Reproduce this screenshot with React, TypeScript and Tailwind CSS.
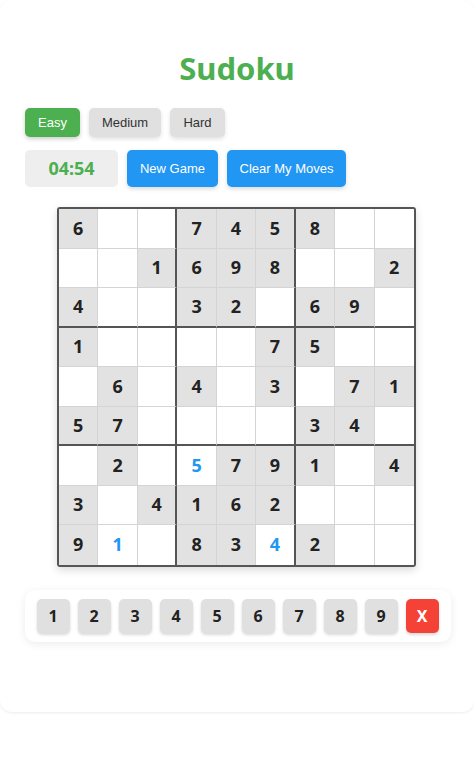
import React from "react";

type Cell = { v: number; given: boolean };

// 0 = empty, negative = player's own entry
const board: number[][] = [
  [6, 0, 0, 7, 4, 5, 8, 0, 0],
  [0, 0, 1, 6, 9, 8, 0, 0, 2],
  [4, 0, 0, 3, 2, 0, 6, 9, 0],
  [1, 0, 0, 0, 0, 7, 5, 0, 0],
  [0, 6, 0, 4, 0, 3, 0, 7, 1],
  [5, 7, 0, 0, 0, 0, 3, 4, 0],
  [0, 2, 0, -5, 7, 9, 1, 0, 4],
  [3, 0, 4, 1, 6, 2, 0, 0, 0],
  [9, -1, 0, 8, 3, -4, 2, 0, 0],
];

const cells: Cell[][] = board.map((row) =>
  row.map((n) => ({ v: Math.abs(n), given: n > 0 }))
);

function SudokuCell({ cell, r, c }: { cell: Cell; r: number; c: number }) {
  const right =
    c === 8 ? "" : c === 2 || c === 5 ? "border-r-2 border-r-[#555]" : "border-r border-r-[#d4d4d4]";
  const bottom =
    r === 8 ? "" : r === 2 || r === 5 ? "border-b-2 border-b-[#555]" : "border-b border-b-[#d4d4d4]";
  const bg = cell.given ? "bg-[#e2e2e2]" : "bg-white";
  const color = cell.given ? "text-[#222]" : "text-[#2196f3]";
  return (
    <div
      className={`flex h-[39.5px] items-center justify-center text-[18px] font-bold ${right} ${bottom} ${bg} ${color}`}
    >
      {cell.v > 0 ? cell.v : ""}
    </div>
  );
}

export default function App() {
  return (
    <div className="min-h-[758px] bg-white" style={{ fontFamily: '"Liberation Sans", Arial, sans-serif' }}>
      <div className="h-[712px] rounded-xl bg-white px-[25px] shadow-[0_1px_3px_rgba(0,0,0,0.08)]">
        <h1 className="pt-[51px] text-center font-['Noto_Sans',sans-serif] text-[31px] font-bold leading-[34px] text-[#4caf50]">
          Sudoku
        </h1>

        <div className="mt-[23px] flex gap-[9px] text-[13px]">
          <button className="h-[29px] w-[55px] rounded-[5px] bg-[#4caf50] text-white shadow-[0_2px_4px_rgba(0,0,0,0.2)]">
            Easy
          </button>
          <button className="h-[29px] w-[72px] rounded-[5px] bg-[#e0e0e0] text-[#333] shadow-[0_2px_4px_rgba(0,0,0,0.12)]">
            Medium
          </button>
          <button className="h-[29px] w-[55px] rounded-[5px] bg-[#e0e0e0] text-[#333] shadow-[0_2px_4px_rgba(0,0,0,0.12)]">
            Hard
          </button>
        </div>

        <div className="mt-[13px] flex gap-[9px] text-[13px]">
          <div className="flex h-[37px] w-[93px] items-center justify-center rounded-[5px] bg-[#eeeeee] font-['Noto_Sans',sans-serif] text-[18px] font-bold text-[#4caf50]">
            04:54
          </div>
          <button className="h-[37px] w-[91px] rounded-[5px] bg-[#2196f3] text-white shadow-[0_2px_4px_rgba(0,0,0,0.15)]">
            New Game
          </button>
          <button className="h-[37px] w-[119px] rounded-[5px] bg-[#2196f3] text-white shadow-[0_2px_4px_rgba(0,0,0,0.15)]">
            Clear My Moves
          </button>
        </div>

        <div className="mt-[20px] flex justify-center pr-[1px]">
          <div className="grid w-[359px] grid-cols-9 overflow-hidden rounded-[3px] border-2 border-[#555] font-['Noto_Sans',sans-serif] shadow-[0_3px_8px_rgba(0,0,0,0.15)]">
            {cells.map((row, r) =>
              row.map((cell, c) => <SudokuCell key={`${r}-${c}`} cell={cell} r={r} c={c} />)
            )}
          </div>
        </div>

        <div className="mx-auto mt-[23px] flex w-[426px] justify-center gap-[8px] rounded-[10px] bg-white py-[9px] pr-[1px] shadow-[0_2px_8px_rgba(0,0,0,0.08)]">
          {[1, 2, 3, 4, 5, 6, 7, 8, 9].map((n) => (
            <button
              key={n}
              className="flex h-[34px] w-[33px] items-center justify-center rounded-[5px] bg-[#e0e0e0] font-['Noto_Sans',sans-serif] text-[16px] font-bold text-[#222] shadow-[0_2px_3px_rgba(0,0,0,0.15)]"
            >
              {n}
            </button>
          ))}
          <button className="flex h-[34px] w-[33px] items-center justify-center rounded-[5px] bg-[#f44336] font-['Noto_Sans',sans-serif] text-[16px] font-bold text-white shadow-[0_2px_3px_rgba(0,0,0,0.15)]">
            X
          </button>
        </div>
      </div>
    </div>
  );
}
